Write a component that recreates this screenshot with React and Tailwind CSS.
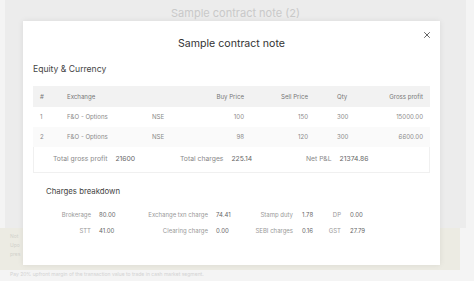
import { X } from 'lucide-react'

const rows = [
  { n: 1, seg: 'F&O - Options', ex: 'NSE', buy: '100', sell: '150', qty: '300', gross: '15000.00' },
  { n: 2, seg: 'F&O - Options', ex: 'NSE', buy: '98', sell: '120', qty: '300', gross: '6600.00' },
]

const cols = 'grid grid-cols-[27px_85px_45px_61px_64px_65px_50px] items-center'

function App() {
  return (
    <div className="relative w-[474px] h-[281px] overflow-hidden bg-[#f4f4f4] font-['Inter',sans-serif]">
      {/* page behind the overlay */}
      <div className="ml-[5px] w-[461px] h-[228px] bg-[#ececec] pt-[5px]">
        <h1 className="text-center text-[11px] leading-[16px] text-[#c9c9c9]">Sample contract note (2)</h1>
      </div>
      <div className="w-[460px] h-[42px] bg-[#ecebe3] pl-[10px] pt-[4px] text-[5px] leading-[9px] text-[#d2d2cc]">
        <p>Not</p>
        <p>Upo</p>
        <p>pres</p>
      </div>
      <p className="pl-[10px] text-[5px] leading-[8px] text-[#d3d3d3]">
        Pay 20% upfront margin of the transaction value to trade in cash market segment.
      </p>

      {/* modal */}
      <div className="absolute left-[23px] top-[21px] w-[417px] h-[244px] bg-white shadow-[0_0_6px_rgba(0,0,0,0.08)] text-[#666]">
        <button className="absolute right-[8px] top-[9px] text-[#444]">
          <X size={10} strokeWidth={2} />
        </button>
        <h2 className="pt-[15px] text-center text-[10.6px] leading-[16px] text-[#333]">Sample contract note</h2>
        <div className="pl-[10px] pr-[10px]">
          <h3 className="mt-[10px] text-[8.6px] leading-[14px] text-[#444]">Equity &amp; Currency</h3>

          <div className="mt-[10px] text-[6.1px]">
            <div className={`${cols} h-[21px] bg-[#f2f2f2] text-[#777]`}>
              <span className="pl-[7px]">#</span>
              <span className="pl-[7px]">Exchange</span>
              <span />
              <span className="pr-[7px] text-right">Buy Price</span>
              <span className="pr-[7px] text-right">Sell Price</span>
              <span className="pl-[22px]">Qty</span>
              <span className="pr-[7px] text-right">Gross profit</span>
            </div>
            {rows.map((r, i) => (
              <div key={r.n} className={`${cols} h-[20px] text-[#8a8a8a] ${i % 2 ? 'bg-[#fafafa]' : 'bg-white'}`}>
                <span className="pl-[7px]">{r.n}</span>
                <span className="pl-[7px] whitespace-nowrap">{r.seg}</span>
                <span className="pl-[7px]">{r.ex}</span>
                <span className="pr-[7px] text-right">{r.buy}</span>
                <span className="pr-[7px] text-right">{r.sell}</span>
                <span className="pl-[22px]">{r.qty}</span>
                <span className="pr-[7px] text-right">{r.gross}</span>
              </div>
            ))}
            <div className="grid grid-cols-[127px_126px_auto] items-center h-[26px] pl-[19px] border-b border-x border-[#f0f0f0] text-[6.8px]">
              <div className="flex gap-[8px] whitespace-nowrap">
                <span className="text-[#8a8a8a]">Total gross profit</span>
                <span className="text-[#666]">21600</span>
              </div>
              <div className="flex gap-[8px] whitespace-nowrap">
                <span className="text-[#8a8a8a]">Total charges</span>
                <span className="text-[#666]">225.14</span>
              </div>
              <div className="flex gap-[8px] whitespace-nowrap">
                <span className="text-[#8a8a8a]">Net P&amp;L</span>
                <span className="text-[#666]">21374.86</span>
              </div>
            </div>
          </div>

          <h3 className="mt-[12px] pl-[13px] text-[7.8px] leading-[12px] text-[#444]">Charges breakdown</h3>
          <div className="mt-[12px] grid grid-cols-[58px_49px_68px_44px_41px_27px_21px_39px] gap-y-[5px] text-[6px] leading-[11px] whitespace-nowrap">
            <span className="text-right text-[#999]">Brokerage</span>
            <span className="pl-[8px] text-[#666]">80.00</span>
            <span className="text-right text-[#999]">Exchange txn charge</span>
            <span className="pl-[8px] text-[#666]">74.41</span>
            <span className="text-right text-[#999]">Stamp duty</span>
            <span className="pl-[9px] text-[#666]">1.78</span>
            <span className="text-right text-[#999]">DP</span>
            <span className="pl-[9px] text-[#666]">0.00</span>

            <span className="text-right text-[#999]">STT</span>
            <span className="pl-[8px] text-[#666]">41.00</span>
            <span className="text-right text-[#999]">Clearing charge</span>
            <span className="pl-[8px] text-[#666]">0.00</span>
            <span className="text-right text-[#999]">SEBI charges</span>
            <span className="pl-[9px] text-[#666]">0.16</span>
            <span className="text-right text-[#999]">GST</span>
            <span className="pl-[9px] text-[#666]">27.79</span>
          </div>
        </div>
      </div>
    </div>
  )
}

export default App
